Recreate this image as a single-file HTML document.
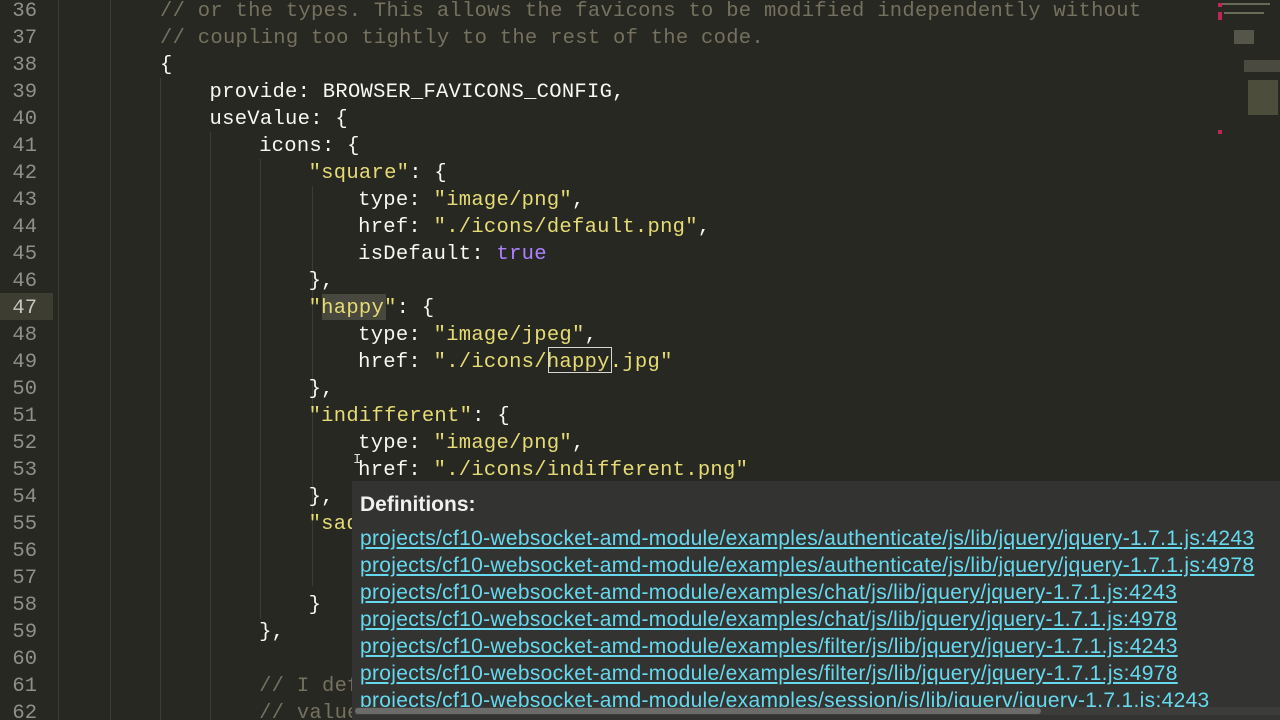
<!DOCTYPE html>
<html><head><meta charset="utf-8"><style>
html,body{margin:0;padding:0;width:1280px;height:720px;overflow:hidden;background:#272822;position:relative;}
.ln{position:absolute;left:0;width:37px;text-align:right;font:20.5px "Liberation Mono",monospace;color:#8f908a;height:27px;line-height:27px;}
.cl{position:absolute;left:61px;font:20.5px "Liberation Mono",monospace;color:#f8f8f2;white-space:pre;height:27px;line-height:27px;letter-spacing:0.28px;}
.c{color:#75715e}.s{color:#e6db74}.p{color:#ae81ff}
.g{position:absolute;top:0;height:720px;width:1px;background:#3b3c35;}
#pop{position:absolute;left:352px;top:481px;width:928px;height:239px;background:#333331;}
#pop h{position:absolute;left:8px;top:12px;font:bold 21px "Liberation Sans",sans-serif;color:#f0f0f0;}
.lk{position:absolute;left:8px;font:21px "Liberation Sans",sans-serif;color:#66d9ef;text-decoration:underline;white-space:nowrap;letter-spacing:0.31px;}
</style></head><body>
<div style="position:absolute;left:0;top:293px;width:53px;height:27px;background:#3e3d32"></div>
<div class="g" style="left:58px"></div><div class="g" style="left:110px"></div><div class="g" style="left:160px;top:78px;height:642px"></div><div class="g" style="left:210px;top:132px;height:588px"></div><div class="g" style="left:260px;top:159px;height:460px"></div><div class="g" style="left:312px;top:186px;height:400px"></div>
<div style="position:absolute;left:322px;top:294px;width:64px;height:26px;background:#49483e"></div>
<div id="code" style="position:absolute;left:0;top:0"></div>
<div style="position:absolute;left:548px;top:347px;width:64px;height:26px;border:1px solid #d8d8d0;box-sizing:border-box"></div>
<script>
var L=[
['<span class="c">// or the types. This allows the favicons to be modified independently without</span>',8],
['<span class="c">// coupling too tightly to the rest of the code.</span>',8],
['{',8],
['provide: BROWSER_FAVICONS_CONFIG,',12],
['useValue: {',12],
['icons: {',16],
['<span class="s">"square"</span>: {',20],
['type: <span class="s">"image/png"</span>,',24],
['href: <span class="s">"./icons/default.png"</span>,',24],
['isDefault: <span class="p">true</span>',24],
['},',20],
['<span class="s">"happy"</span>: {',20],
['type: <span class="s">"image/jpeg"</span>,',24],
['href: <span class="s">"./icons/happy.jpg"</span>',24],
['},',20],
['<span class="s">"indifferent"</span>: {',20],
['type: <span class="s">"image/png"</span>,',24],
['href: <span class="s">"./icons/indifferent.png"</span>',24],
['},',20],
['<span class="s">"sad"</span>: {',20],
['',24],['',24],
['}',20],
['},',16],
['',16],
['<span class="c">// I define the</span>',16],
['<span class="c">// value</span>',16]];
var h='';
for(var i=0;i<L.length;i++){var t=-2+i*27;
h+='<div class="ln" style="top:'+t+'px;'+(i==11?'color:#c8c8c0':'')+'">'+(36+i)+'</div>';
h+='<div class="cl" style="top:'+t+'px;left:'+(61+L[i][1]*12.38)+'px">'+L[i][0]+'</div>';}
document.getElementById('code').innerHTML=h;
</script>
<div style="position:absolute;left:1216px;top:0;width:64px;height:140px">
<div style="position:absolute;left:4px;top:3px;width:50px;height:2px;background:#6a6a5a"></div>
<div style="position:absolute;left:2px;top:3px;width:4px;height:4px;background:#c0245a"></div>
<div style="position:absolute;left:2px;top:12px;width:4px;height:8px;background:#c0245a"></div>
<div style="position:absolute;left:8px;top:12px;width:40px;height:2px;background:#6a6a5a"></div>
<div style="position:absolute;left:18px;top:30px;width:20px;height:14px;background:#55554a"></div>
<div style="position:absolute;left:28px;top:60px;width:40px;height:12px;background:#4a4a40"></div>
<div style="position:absolute;left:32px;top:80px;width:30px;height:35px;background:#4d4d3c"></div>
<div style="position:absolute;left:2px;top:130px;width:4px;height:4px;background:#c0245a"></div>
</div>
<div style="position:absolute;left:353px;top:452px;font:14px 'Liberation Mono',monospace;color:#ddd">I</div>
<div id="pop">
<h>Definitions:</h>
<div class="lk" style="top:46px">projects/cf10-websocket-amd-module/examples/authenticate/js/lib/jquery/jquery-1.7.1.js:4243</div>
<div class="lk" style="top:73px">projects/cf10-websocket-amd-module/examples/authenticate/js/lib/jquery/jquery-1.7.1.js:4978</div>
<div class="lk" style="top:100px">projects/cf10-websocket-amd-module/examples/chat/js/lib/jquery/jquery-1.7.1.js:4243</div>
<div class="lk" style="top:127px">projects/cf10-websocket-amd-module/examples/chat/js/lib/jquery/jquery-1.7.1.js:4978</div>
<div class="lk" style="top:154px">projects/cf10-websocket-amd-module/examples/filter/js/lib/jquery/jquery-1.7.1.js:4243</div>
<div class="lk" style="top:181px">projects/cf10-websocket-amd-module/examples/filter/js/lib/jquery/jquery-1.7.1.js:4978</div>
<div class="lk" style="top:208px">projects/cf10-websocket-amd-module/examples/session/js/lib/jquery/jquery-1.7.1.js:4243</div>
<div style="position:absolute;left:3px;top:226px;width:925px;height:8px;background:#3c3c3a"></div>
<div style="position:absolute;left:3px;top:227px;width:686px;height:6px;background:#6b6b69;border-radius:3px"></div>
</div>
</body></html>
